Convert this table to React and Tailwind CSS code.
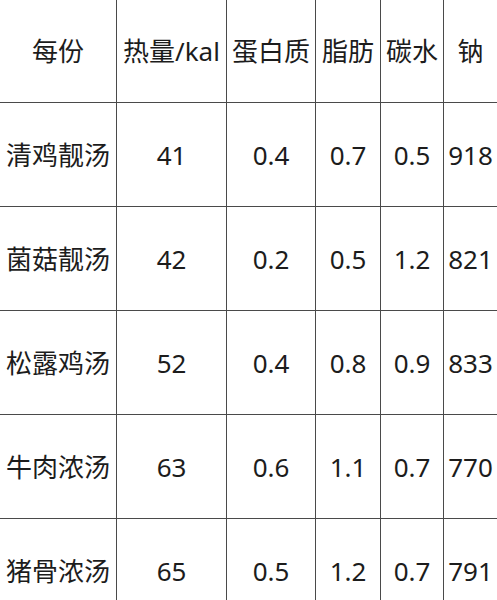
import React from "react";

const header = ["每份", "热量/kal", "蛋白质", "脂肪", "碳水", "钠"];

const rows = [
  ["清鸡靓汤", "41", "0.4", "0.7", "0.5", "918"],
  ["菌菇靓汤", "42", "0.2", "0.5", "1.2", "821"],
  ["松露鸡汤", "52", "0.4", "0.8", "0.9", "833"],
  ["牛肉浓汤", "63", "0.6", "1.1", "0.7", "770"],
  ["猪骨浓汤", "65", "0.5", "1.2", "0.7", "791"],
];

function Row({ cells, tall }) {
  return (
    <div
      className={`grid grid-cols-[117px_110px_89px_65px_63px_53px] border-b border-[#4a4a4a] ${
        tall ? "h-[104px]" : "h-[103px]"
      }`}
    >
      {cells.map((c, i) => (
        <div
          key={i}
          className={`flex items-center justify-center whitespace-nowrap ${
            i < cells.length - 1 ? "border-r border-[#4a4a4a]" : ""
          }`}
        >
          {c}
        </div>
      ))}
    </div>
  );
}

export default function App() {
  return (
    <div
      className="w-[497px] h-[600px] overflow-hidden bg-white text-[#1c1c1c] text-[26px] leading-none"
      style={{ fontFamily: '"Noto Sans", "Noto Sans CJK SC", sans-serif' }}
    >
      <Row cells={header} />
      {rows.map((r, i) => (
        <Row key={i} cells={r} tall />
      ))}
    </div>
  );
}
